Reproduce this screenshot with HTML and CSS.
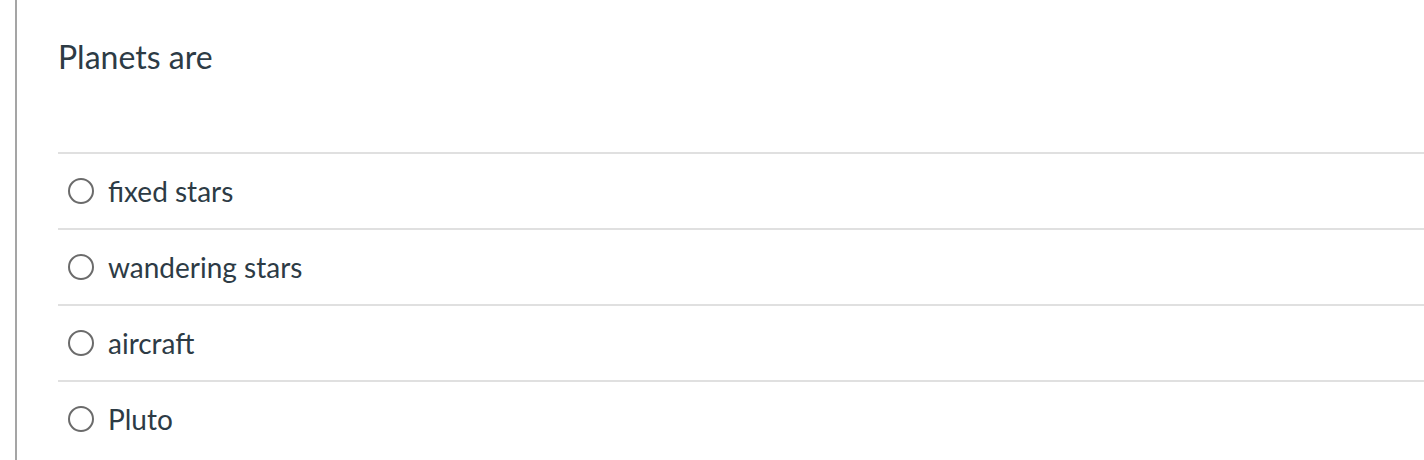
FILE: index.html
```html
<!DOCTYPE html>
<html>
<head>
<meta charset="utf-8">
<link rel="stylesheet" href="styles.css">
</head>
<body>
<div class="frame">
  <div class="question">
    <div class="prompt">Planets are</div>
    <ul class="answers">
      <li class="answer"><span class="radio"></span><span class="label">fixed stars</span></li>
      <li class="answer"><span class="radio"></span><span class="label">wandering stars</span></li>
      <li class="answer"><span class="radio"></span><span class="label">aircraft</span></li>
      <li class="answer"><span class="radio"></span><span class="label">Pluto</span></li>
    </ul>
  </div>
</div>
</body>
</html>
```
FILE: styles.css
```css
html, body {
  margin: 0;
  padding: 0;
  background: #fff;
}
body {
  font-family: Lato, "Noto Sans", sans-serif;
  color: #2d3b45;
  width: 1424px;
  height: 460px;
  overflow: hidden;
}
.frame {
  margin-left: 15px;
  border-left: 2px solid #a5a5a5;
  height: 460px;
  box-sizing: border-box;
}
.question {
  padding-left: 41px;
}
.prompt {
  font-size: 32px;
  line-height: 40px;
  padding-top: 37px;
  height: 152px;
  box-sizing: border-box;
}
.answers {
  list-style: none;
  margin: 0;
  padding: 0;
}
.answer {
  display: flex;
  align-items: center;
  height: 76px;
  border-top: 2px solid #e0e0e0;
  box-sizing: border-box;
  padding-left: 10px;
}
.radio {
  width: 26px;
  height: 26px;
  border: 2px solid #6b6b6b;
  border-radius: 50%;
  box-sizing: border-box;
  flex: none;
  margin-right: 14px;
}
.label {
  font-size: 28px;
  line-height: 34px;
}
```
